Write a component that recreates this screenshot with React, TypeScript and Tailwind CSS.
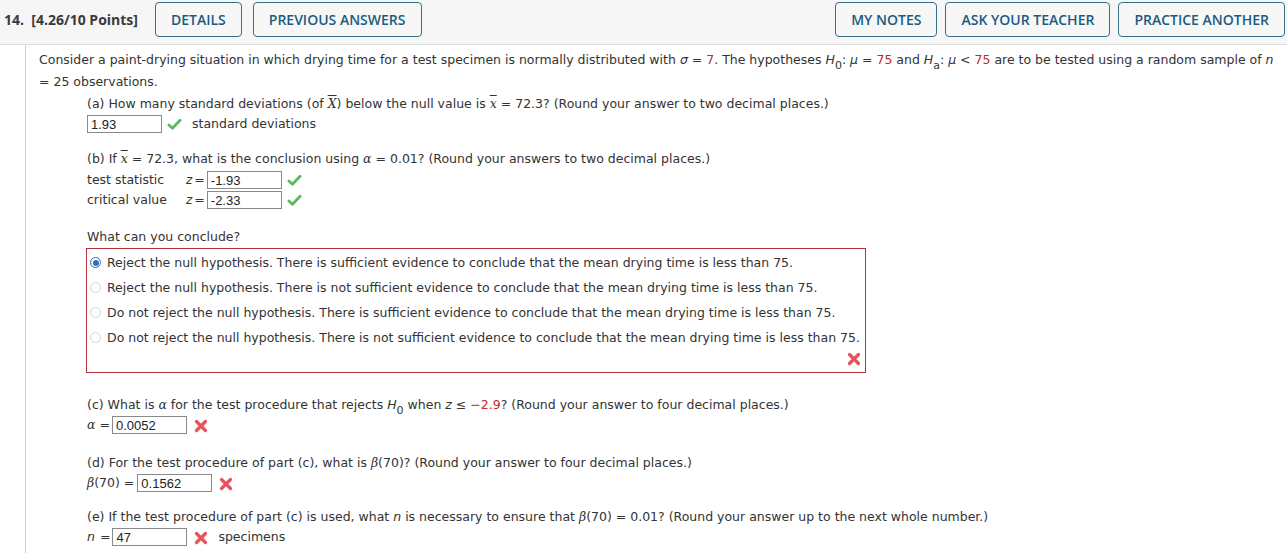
import React from 'react';

const Check = () => (
  <svg width="15" height="13" viewBox="0 0 16 14" className="inline-block">
    <path d="M2 7.5 L5.8 11 L14 2.5" fill="none" stroke="#5cb85c" strokeWidth="3" strokeLinecap="round" strokeLinejoin="round" />
  </svg>
);

const Cross = () => (
  <svg width="14" height="14" viewBox="0 0 14 14" className="inline-block">
    <path d="M2.5 2.5 L11.5 11.5 M11.5 2.5 L2.5 11.5" fill="none" stroke="#e8505b" strokeWidth="3.2" strokeLinecap="round" />
  </svg>
);

const Field = ({ value, w = 'w-[75px]' }: { value: string; w?: string }) => (
  <span className={`inline-flex items-center h-[18px] ${w} border border-[#8a8a8a] bg-white px-[3px] font-['Liberation_Sans',Arial,sans-serif] text-[13px] text-[#222] leading-none`}>
    {value}
  </span>
);

const serif = "font-['DejaVu_Serif',serif]";

const Xbar = ({ upper = false }: { upper?: boolean }) => (
  <span className={`italic overline ${serif}`}>{upper ? 'X' : 'x'}</span>
);

const Sub = ({ children }: { children: React.ReactNode }) => (
  <span className="inline-block text-[11px] leading-none translate-y-[5px]">{children}</span>
);

const Radio = ({ on = false }: { on?: boolean }) => (
  <span className={`inline-flex items-center justify-center w-[11px] h-[11px] rounded-full border ${on ? 'border-[#2a6fb8] bg-white' : 'border-[#d4d4d4] bg-white'}`}>
    {on && <span className="w-[6px] h-[6px] rounded-full bg-[#2a6fb8]" />}
  </span>
);

const Btn = ({ label }: { label: string }) => (
  <button className="h-[35px] px-[15px] border border-[#3a6f8a] rounded-[4px] bg-[#f7f7f7] text-[#1d5b7e] font-['Open_Sans',sans-serif] font-semibold text-[14px]">
    {label}
  </button>
);

const options = [
  'Reject the null hypothesis. There is sufficient evidence to conclude that the mean drying time is less than 75.',
  'Reject the null hypothesis. There is not sufficient evidence to conclude that the mean drying time is less than 75.',
  'Do not reject the null hypothesis. There is sufficient evidence to conclude that the mean drying time is less than 75.',
  'Do not reject the null hypothesis. There is not sufficient evidence to conclude that the mean drying time is less than 75.',
];

export default function App() {
  return (
    <div className="w-[1287px] h-[553px] overflow-hidden bg-white font-['DejaVu_Sans',Verdana,sans-serif] text-[12.5px] text-[#333]">
      {/* header */}
      <div className="h-[45px] bg-[#f6f6f6] border-b border-[#dcdcdc] flex items-start pt-[2px] pl-[4px] pr-[2px]">
        <span className="h-[35px] flex items-center font-['Open_Sans',sans-serif] font-bold text-[14px] text-[#3a3a3a] mr-[17px]">14.&nbsp; [4.26/10 Points]</span>
        <div className="flex gap-[11px]">
          <Btn label="DETAILS" />
          <Btn label="PREVIOUS ANSWERS" />
        </div>
        <div className="ml-auto flex gap-[8px]">
          <Btn label="MY NOTES" />
          <Btn label="ASK YOUR TEACHER" />
          <Btn label="PRACTICE ANOTHER" />
        </div>
      </div>

      <div className="flex">
        <div className="w-[26px] shrink-0 border-r border-[#cfcfcf] h-[508px]" />
        <div className="pl-[13px] pt-[4px] leading-[22px]">
          <p>
            <span className="whitespace-nowrap">
              Consider a paint-drying situation in which drying time for a test specimen is normally distributed with <i>σ</i> = <span className="text-[#c0292f]">7</span>. The hypotheses <i>H</i><Sub>0</Sub>: <i>μ</i> = <span className="text-[#c0292f]">75</span> and <i>H</i><Sub>a</Sub>: <i>μ</i> &lt; <span className="text-[#c0292f]">75</span> are to be tested using a random sample of <i>n</i>
            </span>
            <br />= 25 observations.
          </p>

          <div className="pl-[48px]">
            <p>(a) How many standard deviations (of <Xbar upper />) below the null value is <Xbar /> = 72.3? (Round your answer to two decimal places.)</p>
            <div className="flex items-center h-[18px]">
              <Field value="1.93" />
              <span className="ml-[5px]"><Check /></span>
              <span className="ml-[10px]">standard deviations</span>
            </div>

            <p className="mt-[15px]">(b) If <Xbar /> = 72.3, what is the conclusion using <i className={serif}>α</i> = 0.01? (Round your answers to two decimal places.)</p>
            <div className="flex items-center h-[20px]">
              <span className="w-[99px]">test statistic</span>
              <span className="italic text-[12px] mr-[2px]">z</span><span className="mr-[2px]">=</span>
              <Field value="-1.93" />
              <span className="ml-[5px]"><Check /></span>
            </div>
            <div className="flex items-center h-[20px]">
              <span className="w-[99px]">critical value</span>
              <span className="italic text-[12px] mr-[2px]">z</span><span className="mr-[2px]">=</span>
              <Field value="-2.33" />
              <span className="ml-[5px]"><Check /></span>
            </div>

            <p className="mt-[16px]">What can you conclude?</p>
            <div className="-ml-[1px] w-[780px] border border-[#b5323b] pt-[1px] pb-[4px]">
              {options.map((o, i) => (
                <div key={i} className="flex items-center h-[25px] pl-[3px]">
                  <Radio on={i === 0} />
                  <span className="ml-[6px]">{o}</span>
                </div>
              ))}
              <div className="flex justify-end pr-[4px] h-[18px] items-center"><Cross /></div>
            </div>

            <p className="mt-[21px]">(c) What is <i className={serif}>α</i> for the test procedure that rejects <i>H</i><Sub>0</Sub> when <i>z</i> ≤ <span className="text-[#c0292f]">−2.9</span>? (Round your answer to four decimal places.)</p>
            <div className="flex items-center h-[18px]">
              <i className={`${serif} mr-[4px]`}>α</i><span className="mr-[2px]">=</span>
              <Field value="0.0052" />
              <span className="ml-[7px]"><Cross /></span>
            </div>

            <p className="mt-[18px]">(d) For the test procedure of part (c), what is <i className={serif}>β</i>(70)? (Round your answer to four decimal places.)</p>
            <div className="flex items-center h-[18px]">
              <span className="mr-[3px]"><i className={serif}>β</i>(70) =</span>
              <Field value="0.1562" />
              <span className="ml-[7px]"><Cross /></span>
            </div>

            <p className="mt-[14px]">(e) If the test procedure of part (c) is used, what <i>n</i> is necessary to ensure that <i className={serif}>β</i>(70) = 0.01? (Round your answer up to the next whole number.)</p>
            <div className="flex items-center h-[18px]">
              <i className="mr-[5px]">n</i><span className="mr-[2px]">=</span>
              <Field value="47" />
              <span className="ml-[7px]"><Cross /></span>
              <span className="ml-[10px]">specimens</span>
            </div>
          </div>
        </div>
      </div>
    </div>
  );
}
